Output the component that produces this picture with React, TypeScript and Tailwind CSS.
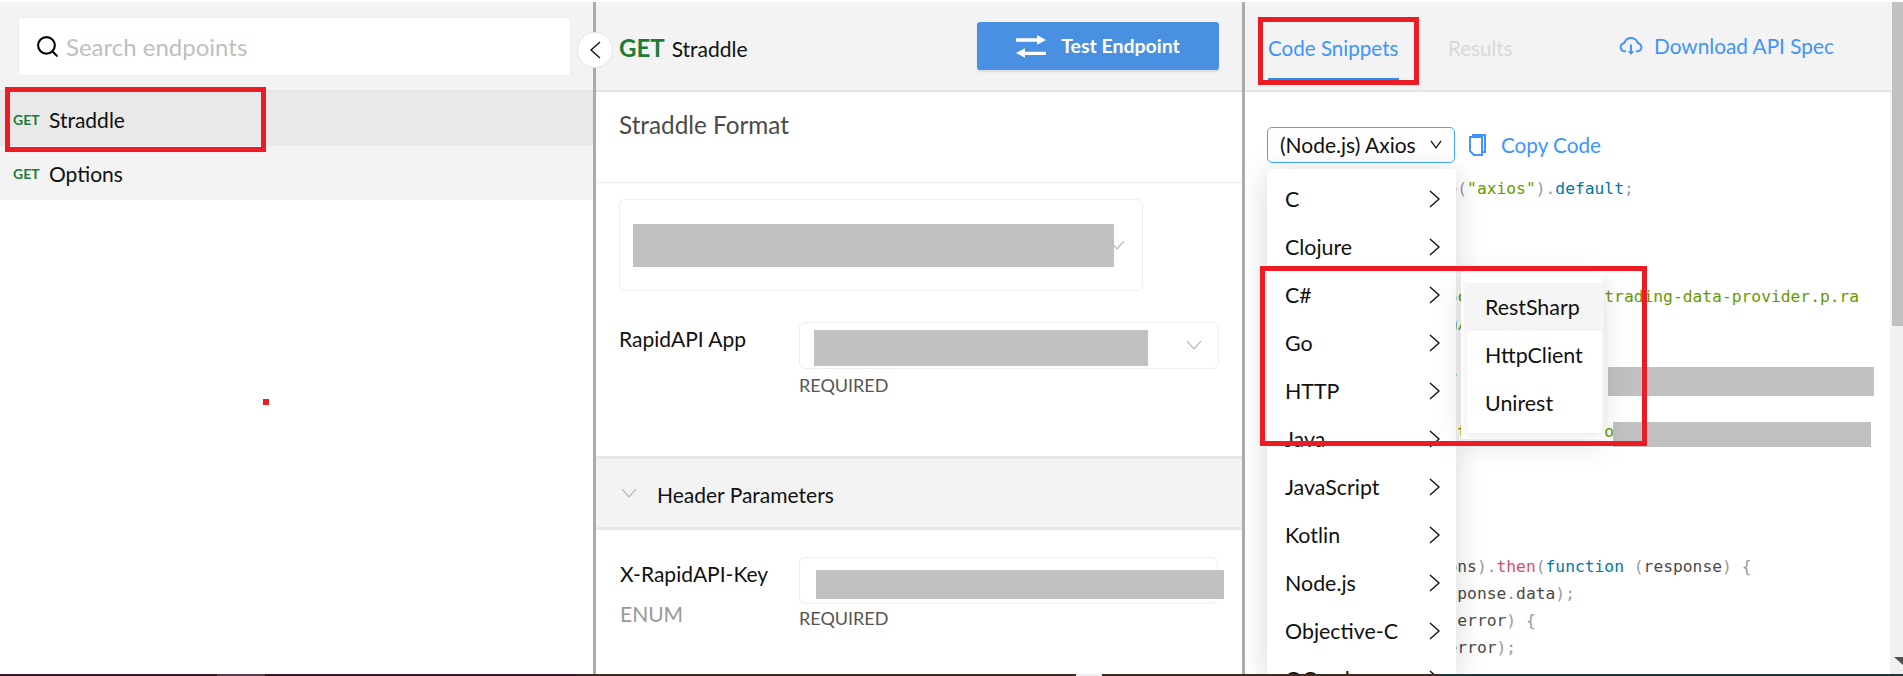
import React from "react";
import { Search } from "lucide-react";
import { AiOutlineCloudDownload } from "react-icons/ai";

const K = ({ children }: { children: React.ReactNode }) => <span className="text-[#0077aa]">{children}</span>;
const S = ({ children }: { children: React.ReactNode }) => <span className="text-[#669900]">{children}</span>;
const P = ({ children }: { children: React.ReactNode }) => <span className="text-[#999999]">{children}</span>;
const F = ({ children }: { children: React.ReactNode }) => <span className="text-[#dd4a68]">{children}</span>;

const codeLines: React.ReactNode[] = [
  <><K>var</K> axios <P>=</P> <F>require</F><P>(</P><S>"axios"</S><P>)</P><P>.</P><K>default</K><P>;</P></>,
  "",
  <><K>var</K> options <P>=</P> <P>{"{"}</P></>,
  <>  method<P>:</P> <S>'GET'</S><P>,</P></>,
  <>  url<P>:</P> <S>'https://stockindexoptions-trading-data-provider.p.ra</S></>,
  <S>         pidapi.com/</S>,
  <>  headers<P>:</P> <P>{"{"}</P></>,
  <S>    'X-RapidAPI-Key'</S>,
  "",
  <S>    'X-RapidAPI-Host': 'stockindexoptions</S>,
  "",
  "",
  <P>{"};"}</P>,
  "",
  <>axios<P>.</P><F>request</F><P>(</P>options<P>)</P><P>.</P><F>then</F><P>(</P><K>function</K> <P>(</P>response<P>)</P> <P>{"{"}</P></>,
  <>    console<P>.</P><F>log</F><P>(</P>response<P>.</P>data<P>)</P><P>;</P></>,
  <><P>{"}"}</P><P>)</P><P>.</P><F>catch</F><P>(</P><K>function</K> <P>(</P>error<P>)</P> <P>{"{"}</P></>,
  <>    console<P>.</P><F>error</F><P>(</P>error<P>)</P><P>;</P></>,
];

const languages = ["C", "Clojure", "C#", "Go", "HTTP", "Java", "JavaScript", "Kotlin", "Node.js", "Objective-C", "OCaml"];

const Caret = () => (
  <svg viewBox="0 0 16 10" className="w-4 h-[10px] text-[#bdbdbd]" fill="none" stroke="currentColor" strokeWidth="1.2">
    <path d="M1 1l7 8 7-8" />
  </svg>
);

const MenuArrow = ({ flip }: { flip?: boolean }) => (
  <svg viewBox="0 0 11 18" className={flip ? "w-[11px] h-[18px] rotate-180 text-[#111111]" : "w-[11px] h-[18px] text-[#111111]"} fill="none" stroke="currentColor" strokeWidth="1.4">
    <path d="M1 1l9 8-9 8" />
  </svg>
);

const Redbox = ({ className }: { className: string }) => (
  <div className={`absolute border-[5px] border-[#ed1c24] pointer-events-none ${className}`} />
);

export default function App() {
  return (
    <div className="relative w-[1903px] h-[676px] overflow-hidden bg-white flex flex-col font-[Lato,sans-serif] text-[#111111]">
      <div className="flex flex-1 min-h-0 pt-[2px]">
        {/* Endpoint list */}
        <div className="w-[593px] flex-none flex flex-col">
          <div className="h-[90px] flex-none bg-[#f3f3f3] border-b-2 border-[#e6e6e6] pl-[18px] pr-[22px] pt-[15px]">
            <div className="h-[59px] bg-white border border-[#eeeeee] rounded-[3px] flex items-center pl-[16px] gap-[6px]">
              <Search className="w-[25px] h-[25px] text-black" strokeWidth={2} />
              <span className="text-[24px] text-[#bfbfbf]">Search endpoints</span>
            </div>
          </div>
          <div className="h-[54px] flex-none bg-[#e9e9e9] flex items-center pl-[13px]">
            <span className="w-[36px] text-[14px] font-bold text-[#1f7a3a]">GET</span>
            <span className="text-[21px] pt-[2px]">Straddle</span>
          </div>
          <div className="h-[54px] flex-none bg-[#f3f3f3] flex items-center pl-[13px]">
            <span className="w-[36px] text-[14px] font-bold text-[#1f7a3a]">GET</span>
            <span className="text-[21px] pt-[2px]">Options</span>
          </div>
        </div>

        {/* Parameters */}
        <div className="w-[652px] flex-none border-x-[3px] border-[#ababab] flex flex-col">
          <div className="h-[90px] flex-none bg-[#f3f3f3] border-b-2 border-[#e6e6e6] flex items-start justify-between pl-[23px] pr-[23px]">
            <div className="flex items-baseline gap-[7px] pt-[30px]">
              <span className="text-[24px] leading-[32px] font-bold text-[#1c7d36]">GET</span>
              <span className="text-[21px] leading-[32px]">Straddle</span>
            </div>
            <div className="mt-[20px] w-[242px] h-[48px] bg-[#4a90e2] rounded-[3px] shadow-[0_2px_2px_rgba(0,0,0,0.1)] flex items-center justify-center gap-[15px] text-white">
              <svg viewBox="0 0 30 23" className="w-[30px] h-[23px]" fill="currentColor">
                <path d="M0 3.3h21V0l9 5-9 4.7V6.7H0zM30 16.7H9v-3.4L0 18l9 4.7V20h21z" />
              </svg>
              <span className="text-[19.5px] font-bold">Test Endpoint</span>
            </div>
          </div>
          <div className="h-[91px] flex-none border-b border-[#ececec] pl-[23px] pt-[18px]">
            <span className="text-[24.3px] leading-[30px] text-[#4a4a4a]">Straddle Format</span>
          </div>
          <div className="pl-[23px] pr-[23px] pt-[16px] h-[273px] flex-none">
            <div className="w-[524px] h-[92px] border border-[#eeeeee] rounded-[6px] flex items-center pl-[13px]">
              <div className="w-[481px] h-[43px] bg-[#c1c1c1]" />
              <div className="-ml-[5px]"><Caret /></div>
            </div>
            <div className="flex mt-[31px]">
              <div className="w-[180px] text-[21px] leading-[26px] pt-[4px]">RapidAPI App</div>
              <div>
                <div className="w-[420px] h-[47px] border border-[#eeeeee] rounded-[6px] flex items-start pl-[14px] pt-[7px]">
                  <div className="w-[334px] h-[36px] bg-[#c1c1c1]" />
                  <div className="ml-[38px] mt-[10px]"><Caret /></div>
                </div>
                <div className="text-[18px] leading-[24px] mt-[4px] text-[#555555]">REQUIRED</div>
              </div>
            </div>
          </div>
          <div className="h-[74px] flex-none bg-[#f3f3f3] border-y-[3px] border-[#e8e8e8] flex items-center pl-[25px] gap-[20px]">
            <Caret />
            <span className="text-[21px] pt-[3px]">Header Parameters</span>
          </div>
          <div className="flex pl-[24px] pt-[27px]">
            <div className="w-[179px]">
              <div className="text-[21px] leading-[26px] pt-[4px]">X-RapidAPI-Key</div>
              <div className="text-[21px] leading-[26px] mt-[14px] text-[#999999]">ENUM</div>
            </div>
            <div>
              <div className="w-[419px] h-[47px] border border-[#eeeeee] rounded-[6px] pl-[16px] pt-[12px]">
                <div className="w-[408px] h-[29px] bg-[#c1c1c1]" />
              </div>
              <div className="text-[18px] leading-[24px] mt-[2px] text-[#555555]">REQUIRED</div>
            </div>
          </div>
        </div>

        {/* Code */}
        <div className="relative flex-1 min-w-0 flex overflow-hidden">
          <div className="w-[647px] flex-none flex flex-col">
            <div className="h-[90px] flex-none bg-[#f3f3f3] border-b-2 border-[#e6e6e6] flex items-start text-[20.6px]">
              <div className="ml-[23px] w-[131px] h-[78px] border-b-2 border-[#1890ff] pt-[32px] leading-[28px] text-[#3f94ff] whitespace-nowrap">Code Snippets</div>
              <div className="ml-[49px] w-[66px] pt-[32px] leading-[28px] text-[#d9d9d9]">Results</div>
              <div className="ml-[104px] pt-[30px] flex items-center gap-[10px] text-[#3f94ff] leading-[28px]">
                <AiOutlineCloudDownload className="w-[26px] h-[26px]" />
                <span className="text-[20.8px]">Download API Spec</span>
              </div>
            </div>
            <div className="flex-1 min-h-0 border-r-2 border-[#f1f1f1] overflow-hidden">
              <div className="flex items-center pl-[22px] pt-[35px]">
                <div className="w-[188px] h-[36px] border border-[#40a9ff] rounded-[5px] flex items-center pl-[12px] gap-[14px] text-[21px]">
                  <span className="whitespace-nowrap">(Node.js) Axios</span>
                  <svg viewBox="0 0 12 10" className="w-[12px] h-[10px] text-[#222222]" fill="none" stroke="currentColor" strokeWidth="1.3">
                    <path d="M1 1l5 7 5-7" />
                  </svg>
                </div>
                <svg viewBox="0 0 17 22" className="ml-[14px] w-[17px] h-[22px] text-[#3f94ff]" fill="none" stroke="currentColor" strokeWidth="2">
                  <path d="M4 3V1h12v17h-3" />
                  <path d="M1 3h12v18H5l-4-4z" />
                </svg>
                <span className="ml-[15px] pt-[1px] text-[20.7px] text-[#3f94ff]">Copy Code</span>
              </div>
              <pre className="mt-[12px] pl-[26px] font-['DejaVu_Sans_Mono',monospace] text-[16.3px] leading-[27px] text-[#4a4a4a] whitespace-pre">
                {codeLines.map((line, i) => (
                  <div key={i} className="h-[27px]">{line}</div>
                ))}
              </pre>
            </div>
          </div>
          <div className="w-[11px] flex-none bg-[#f1f1f1] flex flex-col justify-between">
            <div className="h-[324px] bg-[#c1c1c1]" />
            <svg viewBox="0 0 11 8" className="w-[11px] h-[8px] mb-[9px] text-[#505050]" fill="currentColor">
              <path d="M2 0h9v8z" />
            </svg>
          </div>

          {/* Redactions over the code */}
          <div className="absolute left-[363px] top-[365px] w-[266px] h-[29px] bg-[#c1c1c1]" />
          <div className="absolute left-[368px] top-[420px] w-[258px] h-[25px] bg-[#c1c1c1]" />

          {/* Language menu */}
          <div className="absolute left-[22px] top-[167px] w-[189px] h-[507px] bg-white rounded-t-[4px] pt-[6px] shadow-[0_3px_30px_rgba(0,0,0,0.16)] text-[21.4px]">
            {languages.map((name) => (
              <div key={name} className="h-[48px] flex items-center justify-between pl-[18px] pr-[16px]">
                <span>{name}</span>
                <MenuArrow />
              </div>
            ))}
          </div>
          <div className="absolute left-[216px] top-[270px] w-[143px] h-[167px] bg-white pl-[6px] pt-[5px] shadow-[0_6px_30px_rgba(0,0,0,0.1)]">
            <div className="w-[135px] h-[156px] bg-white rounded-[4px] py-[6px] shadow-[0_2px_10px_rgba(0,0,0,0.1)] text-[21.4px]">
              <div className="h-[48px] bg-[#f5f5f5] flex items-center pl-[18px]">RestSharp</div>
              <div className="h-[48px] flex items-center pl-[18px]">HttpClient</div>
              <div className="h-[48px] flex items-center pl-[18px]">Unirest</div>
            </div>
          </div>
        </div>
      </div>

      <div className="h-[2px] flex-none flex">
        <div className="w-[217px] bg-[#3a1628]" />
        <div className="w-[48px] bg-[#5c3a50]" />
        <div className="w-[311px] bg-[#3a1628]" />
        <div className="w-[500px] bg-[#3e2a20]" />
        <div className="w-[26px] bg-[#eeeeee]" />
        <div className="w-[338px] bg-[#3e2a20]" />
        <div className="flex-1 bg-[#23343a]" />
      </div>

      {/* Collapse toggle over the divider */}
      <div className="absolute left-[577px] top-[32px] w-[36px] h-[36px] rounded-full bg-white border border-[#e5e5e5] flex items-center justify-center">
        <MenuArrow flip />
      </div>

      {/* Annotation marks */}
      <Redbox className="left-[5px] top-[87px] w-[261px] h-[65px]" />
      <Redbox className="left-[1258px] top-[17px] w-[161px] h-[68px]" />
      <Redbox className="left-[1260px] top-[266px] w-[387px] h-[180px]" />
      <div className="absolute left-[263px] top-[399px] w-[6px] h-[6px] bg-[#ed1c24]" />
    </div>
  );
}
